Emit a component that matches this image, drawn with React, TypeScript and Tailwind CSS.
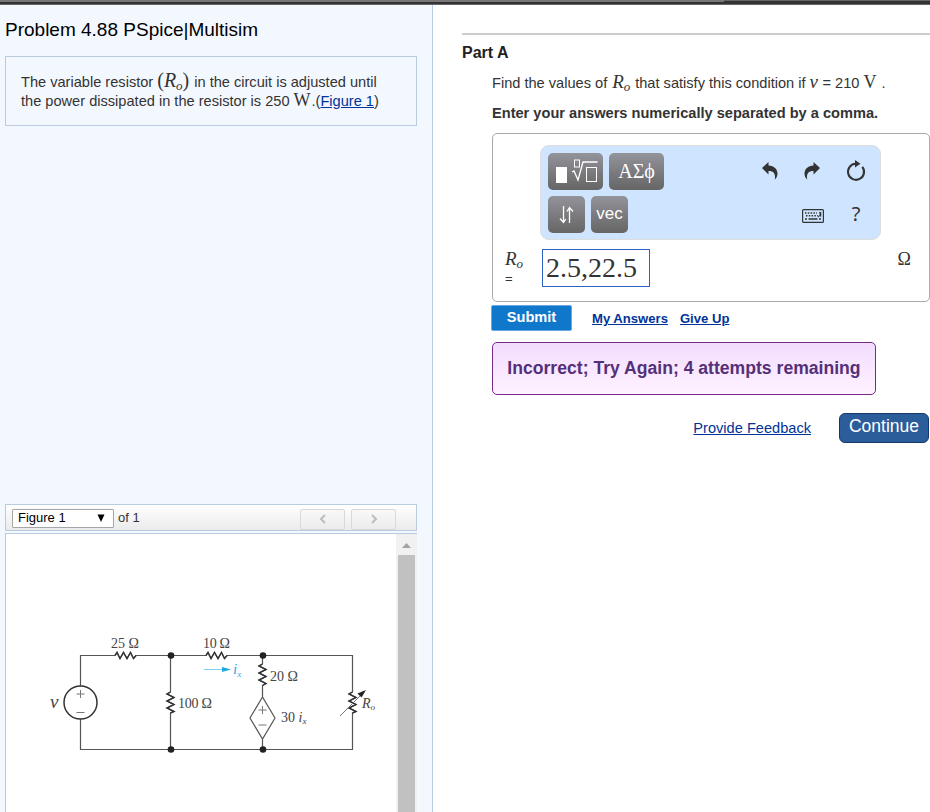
import type { ReactNode } from 'react'

const SERIF = "font-['Liberation_Serif',serif]"

const Ro = ({ className = '' }: { className?: string }) => (
  <span className={`inline-block font-['Liberation_Serif',serif] italic leading-none ${className}`}>
    R<span className="relative top-[3px] text-[13px]">o</span>
  </span>
)

const ToolButton = ({ className, children }: { className: string; children: ReactNode }) => (
  <button
    className={`flex h-[37px] items-center justify-center rounded-[5px] bg-linear-to-b from-[#93939b] to-[#666] text-white ${className}`}
  >
    {children}
  </button>
)

const NavButton = ({ d }: { d: string }) => (
  <button className="flex h-[21px] w-[45px] items-center justify-center rounded-[2px] border border-[#d8d8d8] bg-linear-to-b from-[#f8f8f8] to-[#ececec]">
    <svg width="8" height="10" viewBox="0 0 8 10" fill="none" stroke="#bdbdbd" strokeWidth="2">
      <path d={d} />
    </svg>
  </button>
)

const Circuit = () => (
  <svg
    className="mt-[92px] ml-[9px] block"
    width="380"
    height="140"
    viewBox="15 626 380 140"
    fill="none"
    stroke="#555"
    strokeWidth="1.2"
  >
    <path d="M80.500 686V655.500H115l2-3 3 6 3.500-6 3.500 6 3.500-6 3 6 2.500-3H206l2-3 3 6 3.500-6 3.500 6 3.500-6 3 6 2.500-3H352.500V692l-3.500 2 7 3.500-7 3.500 7 3.500-7 3.500 7 3.500-3.500 1.500V749.500H80.500V719" />
    <path d="M170.500 655V692l-3.500 2 7 3.500-7 3.500 7 3.500-7 3.500 7 3.500-3.500 1.500V749" />
    <path d="M262.500 655V664l-3.500 2 7 3.500-7 3.500 7 3.500-7 3.500 7 3.500-3.500 2V697l12.500 21-12.500 21-12.500-21 12.500-21M262.500 739V749" />
    {/* resistor zigzags are inked heavier than the wires */}
    <g stroke="#333" strokeWidth="1.400">
      <path d="M115 655.500l2-3 3 6 3.500-6 3.500 6 3.500-6 3 6 2.500-3M206 655.500l2-3 3 6 3.500-6 3.500 6 3.500-6 3 6 2.500-3" />
      <path d="M170.500 692l-3.500 2 7 3.500-7 3.500 7 3.500-7 3.500 7 3.500-3.500 1.500M352.500 692l-3.500 2 7 3.500-7 3.500 7 3.500-7 3.500 7 3.500-3.500 1.500" />
      <path d="M262.500 664l-3.500 2 7 3.500-7 3.500 7 3.500-7 3.500 7 3.500-3.500 2" />
    </g>
    <circle cx="80.500" cy="702.500" r="16.500" stroke="#333" strokeWidth="1.500" />
    <g stroke="#777" strokeWidth="1">
      <path d="M76.500 694h8M80.500 690v8M76.500 712.500h8" />
      <path d="M258.500 710h8M262.500 706v8M258.500 725h8" />
      <path d="M340 716L361 695" />
    </g>
    <path d="M366 690l-8.500 3.500 4 4z" fill="#222" stroke="none" />
    <g fill="#222" stroke="none">
      <circle cx="171" cy="655.500" r="3.300" />
      <circle cx="263" cy="655.500" r="3.300" />
      <circle cx="171" cy="749.500" r="3.300" />
      <circle cx="263" cy="749.500" r="3.300" />
    </g>
    <path d="M204 669.500h20" stroke="#7fd0ee" strokeWidth="1" />
    <path d="M222 667l9 2.500-9 2.500z" fill="#1fa9e1" stroke="none" />
    <g className={SERIF} fill="#444" stroke="none" fontSize="14">
      <text x="111" y="648" textLength="28">25 Ω</text>
      <text x="203" y="648" textLength="27">10 Ω</text>
      <text x="178" y="708" textLength="34">100 Ω</text>
      <text x="270" y="681" textLength="28">20 Ω</text>
      <text x="281" y="722">
        30 <tspan fontStyle="italic">i</tspan>
        <tspan fontStyle="italic" fontSize="9" dy="2">x</tspan>
      </text>
      <text x="50" y="708" fontSize="19" fontStyle="italic">v</text>
      <text x="362" y="708" fontStyle="italic">
        R<tspan fontSize="9" dy="2">o</tspan>
      </text>
      <text x="233" y="674" fontStyle="italic" fill="#1fa9e1" fontSize="15">
        i<tspan fontSize="9" dy="3">x</tspan>
      </text>
    </g>
  </svg>
)

const ProblemPane = () => (
  <div className="flex w-[433px] shrink-0 flex-col border-r border-[#b9cbde] bg-[#f3f8ff] pl-[5px]">
    <h1 className="mt-[13px] h-6 text-[19px] leading-6 text-black">Problem 4.88 PSpice|Multisim</h1>
    <div className="mt-[14px] h-[70px] w-[412px] border border-[#b9cbde] pt-[13px] pl-[15px] text-[14.6px] leading-[21px] whitespace-nowrap">
      <div className="flex h-[21px] items-baseline">
        The variable resistor
        <span className={`ml-1 w-[34px] text-[20px] leading-none ${SERIF}`}>
          (<Ro />)
        </span>
        <span className="ml-[3px]">in the circuit is adjusted until</span>
      </div>
      <div className="flex h-[21px] items-baseline">
        the power dissipated in the resistor is 250
        <span className={`ml-1 w-[18px] text-[18px] leading-none ${SERIF}`}>W</span>.(
        <a className="text-[#003399] underline">Figure 1</a>)
      </div>
    </div>

    <div className="mt-[378px] flex h-[27px] w-[412px] items-center border border-[#b9cbde] bg-linear-to-b from-white to-[#ebebeb] pr-5 pl-[6px] text-[13px]">
      <div className="mt-px flex h-[19px] w-[102px] items-center justify-between rounded-[1px] border border-[#a6a6a6] bg-white pr-2 pl-[5px] text-black">
        Figure 1
        <svg width="8" height="8" viewBox="0 0 8 8">
          <path d="M0.500 0.500h7L4 8z" fill="#000" />
        </svg>
      </div>
      <span className="ml-1 text-[#333]">of 1</span>
      <div className="mt-[3px] ml-auto flex gap-[6px]">
        <NavButton d="M6 1L2 5l4 4" />
        <NavButton d="M2 1l4 4-4 4" />
      </div>
    </div>

    <div className="mt-[2px] flex w-[412px] flex-1 overflow-hidden border-t border-l border-[#b9cbde] bg-white">
      <div className="flex-1 overflow-hidden">
        <Circuit />
      </div>
      <div className="flex w-[21px] flex-col items-center bg-[#f1f1f1]">
        <svg className="mt-[9px]" width="9" height="5" viewBox="0 0 9 5">
          <path d="M0 5L4.500 0 9 5z" fill="#a3a3a3" />
        </svg>
        <div className="mt-[7px] w-[17px] flex-1 bg-[#c1c1c1]" />
      </div>
    </div>
  </div>
)

const TemplateIcon = () => (
  <svg width="44" height="27" viewBox="0 0 44 27" fill="none" stroke="#fff">
    <rect x="2" y="9" width="11" height="16" fill="#fff" stroke="none" />
    <rect x="20.500" y="2" width="5" height="7" strokeWidth="1" />
    <path d="M18 14l2-1 4 9L29 4h14.500" strokeWidth="1.300" />
    <rect x="32.500" y="9.500" width="10" height="14" strokeWidth="1" />
  </svg>
)

const UndoIcon = ({ flip }: { flip?: boolean }) => (
  <svg className={flip ? '-scale-x-100' : ''} width="16" height="18" viewBox="0 0 16 18" fill="#333">
    <path d="M0 6L6.500 0v3.500C12 4 15.500 7 15.500 11.500c0 2.500-1 4.500-2.700 6.200C13.800 11.500 11.500 9 6.500 9v3.500z" />
  </svg>
)

const ResetIcon = () => (
  <svg width="20" height="22" viewBox="0 0 20 22" fill="none">
    <path d="M16.300 6.800A8 8 0 1 1 9.500 3.800" stroke="#333" strokeWidth="2.100" />
    <path d="M9 0l5.500 3.800L9 7.600z" fill="#333" />
  </svg>
)

const KeyboardIcon = () => (
  <svg width="22" height="14" viewBox="0 0 22 14" fill="none" stroke="#333">
    <rect x="0.600" y="0.600" width="20.800" height="12.800" rx="1" strokeWidth="1.200" />
    <path d="M3 4h12M4 6.800h12M18 3v4.500h-2" strokeWidth="1.500" strokeDasharray="1.500 1.300" />
    <path d="M3 10h2M6.500 10h9M17 10h2M18.500 3v4.500" strokeWidth="1.500" />
  </svg>
)

const AnswerBox = () => (
  <div className="mt-[10px] h-[169px] w-[438px] rounded-[5px] border border-[#a9a9a9]">
    <div className="mt-[11px] ml-[47px] flex h-[95px] w-[341px] justify-between rounded-[9px] border border-[#ddd] bg-[#cfe5ff] pt-[7px] pr-[14px] pl-[7px]">
      <div className="flex flex-col gap-[6px]">
        <div className="flex gap-[6px]">
          <ToolButton className="w-[55px]">
            <TemplateIcon />
          </ToolButton>
          <ToolButton className={`w-[55px] pb-[2px] text-[20px] ${SERIF}`}>ΑΣϕ</ToolButton>
        </div>
        <div className="flex gap-[6px]">
          <ToolButton className="w-[37px]">
            <svg width="15" height="18" viewBox="0 0 15 18" fill="none" stroke="#fff" strokeWidth="1.300">
              <path d="M4.500 0v16M1 12.500L4.500 16.500 6.800 13M10.500 17V2M8 5.500L10.500 1.500 14 5.500" />
            </svg>
          </ToolButton>
          <ToolButton className="w-[37px] pb-[2px] text-[17px]">vec</ToolButton>
        </div>
      </div>
      <div className="flex flex-col">
        <div className="mt-[7px] flex h-[22px] items-center gap-[26px]">
          <UndoIcon />
          <UndoIcon flip />
          <ResetIcon />
        </div>
        <div className="mt-5 flex h-6 items-center justify-end gap-[22px]">
          <span className="mt-1">
            <KeyboardIcon />
          </span>
          <span className="w-5 text-center font-['Noto_Sans',sans-serif] text-[20px]">?</span>
        </div>
      </div>
    </div>
    <div className="mt-[9px] flex">
      <div className="ml-3 w-[37px]">
        <Ro className="block h-5 text-[19px]" />
        <div className="text-[13px] leading-[14px]">=</div>
      </div>
      <div className={`flex h-[38px] w-[108px] items-center border border-[#2f63c1] pl-[3px] text-[28px] leading-none ${SERIF}`}>
        2.5,22.5
      </div>
      <span className={`mr-[18px] ml-auto text-[18px] leading-5 ${SERIF}`}>Ω</span>
    </div>
  </div>
)

const AnswerPane = () => (
  <div className="flex-1 pl-[29px]">
    <div className="mt-[28px] border-t-2 border-[#ccc]" />
    <h2 className="mt-2 h-5 text-[16px] leading-5 font-bold text-[#222]">Part A</h2>
    <div className="w-[438px] pl-[30px] text-[14.6px] whitespace-nowrap">
      <div className="mt-[9px] flex h-5 items-baseline leading-5">
        Find the values of
        <span className="ml-[5px] w-[20px]">
          <Ro className="text-[19px]" />
        </span>
        <span className="ml-[3px]">that satisfy this condition if</span>
        <span className={`mx-1 w-[9px] text-[19px] leading-none italic ${SERIF}`}>v</span>= 210
        <span className={`mr-[5px] ml-1 text-[18px] leading-none ${SERIF}`}>V</span>.
      </div>
      <div className="mt-[11px] h-5 leading-5 font-bold">
        Enter your answers numerically separated by a comma.
      </div>
      <AnswerBox />
      <div className="mt-[3px] flex h-[26px] items-center text-[13px] font-bold">
        <button className="-ml-px h-[26px] w-[81px] rounded-[2px] border border-[#6aa5ea] bg-[#0f78cb] text-[14.6px] text-white">
          Submit
        </button>
        <a className="mt-px ml-5 text-[13.1px] text-[#003399] underline">My Answers</a>
        <a className="mt-px ml-3 text-[13.1px] text-[#003399] underline">Give Up</a>
      </div>
      <div className="mt-[11px] flex h-[53px] w-[384px] items-center justify-center rounded-[5px] border border-[#762b86] bg-linear-to-b from-[#f2dcff] to-[#fff2ff] text-[17.6px] font-bold text-[#543078]">
        Incorrect; Try Again; 4 attempts remaining
      </div>
      <div className="mt-[18px] flex w-[437px] items-center justify-end">
        <a className="mt-px text-[#003399] underline">Provide Feedback</a>
        <button className="ml-7 h-[30px] w-[90px] rounded-[6px] border border-[#16396b] bg-[#2c5d9b] pb-[2px] text-[17.5px] leading-none text-white">
          Continue
        </button>
      </div>
    </div>
  </div>
)

const App = () => (
  <div className="flex h-screen flex-col overflow-hidden bg-white font-['Liberation_Sans',Arial,sans-serif] text-[#333]">
    <div className="flex h-[5px] shrink-0">
      <div className="w-[724px] border-t-2 border-b border-t-[#777] border-b-[#666] bg-[#333]" />
      <div className="flex-1 border-t border-b border-t-[#666] border-b-[#666] bg-[#333]" />
    </div>
    <div className="flex min-h-0 flex-1">
      <ProblemPane />
      <AnswerPane />
    </div>
  </div>
)

export default App
